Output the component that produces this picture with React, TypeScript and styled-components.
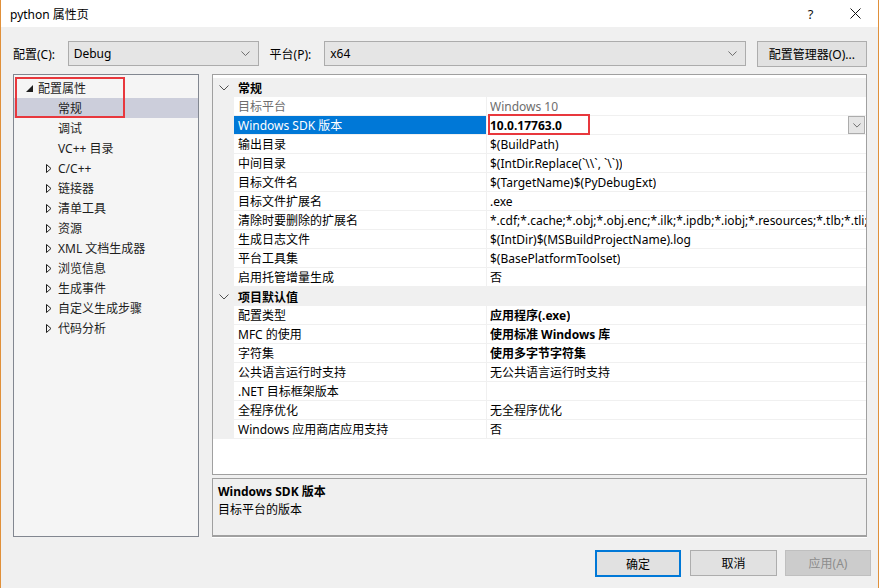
import styled, { createGlobalStyle } from "styled-components";

const GlobalStyle = createGlobalStyle`
  html, body {
    margin: 0;
    padding: 0;
    background: #f0f0f0;
  }
  * {
    box-sizing: border-box;
  }
`;

const FONT = `"Segoe UI", "Noto Sans", "Noto Sans CJK SC", sans-serif`;

interface TreeItem {
  label: string;
  kind: "root" | "leaf" | "branch";
  selected?: boolean;
}

const treeItems: TreeItem[] = [
  { label: "配置属性", kind: "root" },
  { label: "常规", kind: "leaf", selected: true },
  { label: "调试", kind: "leaf" },
  { label: "VC++ 目录", kind: "leaf" },
  { label: "C/C++", kind: "branch" },
  { label: "链接器", kind: "branch" },
  { label: "清单工具", kind: "branch" },
  { label: "资源", kind: "branch" },
  { label: "XML 文档生成器", kind: "branch" },
  { label: "浏览信息", kind: "branch" },
  { label: "生成事件", kind: "branch" },
  { label: "自定义生成步骤", kind: "branch" },
  { label: "代码分析", kind: "branch" },
];

interface GridRow {
  name: string;
  value?: string;
  header?: boolean;
  bold?: boolean;
  muted?: boolean;
  selected?: boolean;
}

const gridRows: GridRow[] = [
  { name: "常规", header: true },
  { name: "目标平台", value: "Windows 10", muted: true },
  { name: "Windows SDK 版本", value: "10.0.17763.0", bold: true, selected: true },
  { name: "输出目录", value: "$(BuildPath)" },
  { name: "中间目录", value: "$(IntDir.Replace(`\\\\`, `\\`))" },
  { name: "目标文件名", value: "$(TargetName)$(PyDebugExt)" },
  { name: "目标文件扩展名", value: ".exe" },
  {
    name: "清除时要删除的扩展名",
    value: "*.cdf;*.cache;*.obj;*.obj.enc;*.ilk;*.ipdb;*.iobj;*.resources;*.tlb;*.tli;*.tlh;*.tmp",
  },
  { name: "生成日志文件", value: "$(IntDir)$(MSBuildProjectName).log" },
  { name: "平台工具集", value: "$(BasePlatformToolset)" },
  { name: "启用托管增量生成", value: "否" },
  { name: "项目默认值", header: true },
  { name: "配置类型", value: "应用程序(.exe)", bold: true },
  { name: "MFC 的使用", value: "使用标准 Windows 库", bold: true },
  { name: "字符集", value: "使用多字节字符集", bold: true },
  { name: "公共语言运行时支持", value: "无公共语言运行时支持" },
  { name: ".NET 目标框架版本", value: "" },
  { name: "全程序优化", value: "无全程序优化" },
  { name: "Windows 应用商店应用支持", value: "否" },
];

const Chevron = ({ size = 9, color = "#606060" }: { size?: number; color?: string }) => (
  <svg width={size} height={size / 2 + 1} viewBox="0 0 10 6">
    <polyline points="0.5,0.5 5,5 9.5,0.5" fill="none" stroke={color} strokeWidth="1" />
  </svg>
);

const ExpandArrow = () => (
  <svg width="6" height="9" viewBox="0 0 6 9">
    <polygon points="0.5,0.5 5,4.5 0.5,8.5" fill="none" stroke="#1e1e1e" strokeWidth="1" />
  </svg>
);

const ExpandedArrow = () => (
  <svg width="7" height="7" viewBox="0 0 7 7">
    <polygon points="7,0 7,7 0,7" fill="#1e1e1e" />
  </svg>
);

const App = () => {
  return (
    <>
      <GlobalStyle />
      <Window>
        <TitleBar>
          <Title>python 属性页</Title>
          <TitleButtons>
            <TitleBtn>?</TitleBtn>
            <TitleBtn>
              <svg width="11" height="11" viewBox="0 0 11 11">
                <path d="M0.5 0.5 L10.5 10.5 M10.5 0.5 L0.5 10.5" stroke="#111" strokeWidth="1" />
              </svg>
            </TitleBtn>
          </TitleButtons>
        </TitleBar>

        <Body>
          <TopRow>
            <Label>配置(C):</Label>
            <Combo $width={192}>
              <span>Debug</span>
              <Chevron />
            </Combo>
            <Label $left={11}>平台(P):</Label>
            <Combo $width={424}>
              <span>x64</span>
              <Chevron />
            </Combo>
            <Button $width={111} $left={11}>配置管理器(O)...</Button>
          </TopRow>

          <Main>
            <TreePanel>
              {treeItems.map((item) => (
                <TreeRow key={item.label} $selected={item.selected}>
                  <TreeIcon $indent={item.kind === "root" ? 12 : 32}>
                    {item.kind === "root" && <ExpandedArrow />}
                    {item.kind === "branch" && <ExpandArrow />}
                  </TreeIcon>
                  <TreeLabel>{item.label}</TreeLabel>
                  {item.kind === "root" && <Highlight />}
                </TreeRow>
              ))}
            </TreePanel>

            <RightColumn>
              <Grid>
                {gridRows.map((row) =>
                  row.header ? (
                    <HeaderRow key={row.name}>
                      <Gutter>
                        <Chevron size={10} color="#505050" />
                      </Gutter>
                      <HeaderLabel>{row.name}</HeaderLabel>
                    </HeaderRow>
                  ) : (
                    <PropRow key={row.name}>
                      <Gutter />
                      <NameCell $selected={row.selected} $muted={row.muted}>
                        {row.name}
                      </NameCell>
                      <ValueCell $bold={row.bold} $muted={row.muted}>
                        <ValueText>{row.value}</ValueText>
                        {row.selected && <RedBox />}
                        {row.selected && (
                          <DropBtn>
                            <Chevron size={8} color="#505050" />
                          </DropBtn>
                        )}
                      </ValueCell>
                    </PropRow>
                  )
                )}
              </Grid>
              <Description>
                <DescTitle>Windows SDK 版本</DescTitle>
                <DescText>目标平台的版本</DescText>
              </Description>
            </RightColumn>
          </Main>

          <Footer>
            <Button $width={86} $primary>确定</Button>
            <Button $width={87} $left={9}>取消</Button>
            <Button $width={86} $left={8} $disabled>应用(A)</Button>
          </Footer>
        </Body>
      </Window>
    </>
  );
};

export default App;

const Window = styled.div`
  width: 879px;
  height: 588px;
  display: flex;
  flex-direction: column;
  background: #f0f0f0;
  border-left: 1px solid #e0903a;
  border-right: 1px solid #e0903a;
  font-family: ${FONT};
  font-size: 12px;
  color: #000;
  overflow: hidden;
`;

const TitleBar = styled.div`
  height: 27px;
  background: #ffffff;
  display: flex;
  align-items: center;
  justify-content: space-between;
  padding-left: 9px;
`;

const Title = styled.div`
  font-size: 12px;
  color: #000;
`;

const TitleButtons = styled.div`
  display: flex;
  align-items: center;
  height: 100%;
`;

const TitleBtn = styled.div`
  width: 45px;
  height: 100%;
  display: flex;
  align-items: center;
  justify-content: center;
  font-size: 13px;
  color: #111;
`;

const Body = styled.div`
  flex: 1;
  display: flex;
  flex-direction: column;
  padding: 14px 11px 0 12px;
`;

const TopRow = styled.div`
  display: flex;
  align-items: center;
  height: 25px;
`;

const Label = styled.div<{ $left?: number }>`
  width: 55px;
  margin-left: ${(p) => p.$left ?? 0}px;
  white-space: nowrap;
`;

const Combo = styled.div<{ $width: number }>`
  width: ${(p) => p.$width}px;
  height: 25px;
  display: flex;
  align-items: center;
  justify-content: space-between;
  padding: 0 8px 0 5px;
  background: #e5e5e5;
  border: 1px solid #acacac;
  font-size: 12px;
`;

const Button = styled.div<{
  $width: number;
  $left?: number;
  $primary?: boolean;
  $disabled?: boolean;
}>`
  width: ${(p) => p.$width}px;
  height: ${(p) => (p.$primary ? 27 : 26)}px;
  margin-left: ${(p) => p.$left ?? 0}px;
  display: flex;
  align-items: center;
  justify-content: center;
  background: ${(p) => (p.$disabled ? "#cccccc" : "#e1e1e1")};
  border: ${(p) =>
    p.$primary ? "2px solid #0078d7" : p.$disabled ? "1px solid #bfbfbf" : "1px solid #adadad"};
  color: ${(p) => (p.$disabled ? "#8c8c8c" : "#000")};
  font-size: 12px;
  white-space: nowrap;
`;

const Main = styled.div`
  display: flex;
  margin-top: 8px;
  height: 463px;
`;

const TreePanel = styled.div`
  width: 187px;
  height: 463px;
  background: #f5f5f5;
  border: 1px solid #828790;
  padding-top: 3px;
  display: flex;
  flex-direction: column;
`;

const TreeRow = styled.div<{ $selected?: boolean }>`
  position: relative;
  height: 20px;
  display: flex;
  align-items: center;
  background: ${(p) => (p.$selected ? "#cccedb" : "transparent")};
`;

const TreeIcon = styled.div<{ $indent: number }>`
  width: ${(p) => p.$indent + 12}px;
  padding-left: ${(p) => p.$indent}px;
  display: flex;
  align-items: center;
`;

const TreeLabel = styled.div`
  white-space: nowrap;
  color: #1e1e1e;
`;

const Highlight = styled.div`
  position: absolute;
  z-index: 2;
  left: 1px;
  top: -1px;
  width: 110px;
  height: 41px;
  border: 2px solid #e8383d;
  pointer-events: none;
`;

const RightColumn = styled.div`
  margin-left: 13px;
  width: 655px;
  display: flex;
  flex-direction: column;
`;

const Grid = styled.div`
  height: 401px;
  background: #ffffff;
  border: 1px solid #a0a0a0;
  padding-top: 3px;
  display: flex;
  flex-direction: column;
`;

const HeaderRow = styled.div`
  height: 19px;
  display: flex;
  align-items: center;
  background: #f0f0f0;
`;

const Gutter = styled.div`
  width: 21px;
  height: 100%;
  flex-shrink: 0;
  background: #f0f0f0;
  display: flex;
  align-items: center;
  justify-content: center;
`;

const HeaderLabel = styled.div`
  padding-left: 4px;
  font-weight: bold;
`;

const PropRow = styled.div`
  height: 19px;
  display: flex;
`;

const NameCell = styled.div<{ $selected?: boolean; $muted?: boolean }>`
  width: 253px;
  flex-shrink: 0;
  padding-left: 4px;
  display: flex;
  align-items: center;
  white-space: nowrap;
  background: ${(p) => (p.$selected ? "#0078d7" : "#ffffff")};
  color: ${(p) => (p.$selected ? "#ffffff" : p.$muted ? "#6d6d6d" : "#000")};
  border-bottom: 1px solid #f0f0f0;
  border-right: 1px solid #f0f0f0;
`;

const ValueCell = styled.div<{ $bold?: boolean; $muted?: boolean }>`
  position: relative;
  flex: 1;
  min-width: 0;
  padding-left: 3px;
  display: flex;
  align-items: center;
  font-weight: ${(p) => (p.$bold ? "bold" : "normal")};
  color: ${(p) => (p.$muted ? "#6d6d6d" : "#000")};
  border-bottom: 1px solid #f0f0f0;
`;

const ValueText = styled.div`
  white-space: nowrap;
  overflow: hidden;
`;

const RedBox = styled.div`
  position: absolute;
  left: 1px;
  top: -2px;
  width: 102px;
  height: 21px;
  border: 2px solid #e8383d;
`;

const DropBtn = styled.div`
  position: absolute;
  right: 1px;
  top: 0;
  width: 17px;
  height: 18px;
  display: flex;
  align-items: center;
  justify-content: center;
  background: #e5e5e5;
  border: 1px solid #acacac;
`;

const Description = styled.div`
  margin-top: 3px;
  height: 59px;
  border: 1px solid #a0a0a0;
  border-bottom: 2px solid #a0a0a0;
  box-shadow: 0 1px 0 #ffffff;
  padding: 4px 5px;
  background: #f0f0f0;
`;

const DescTitle = styled.div`
  font-weight: bold;
  line-height: 18px;
`;

const DescText = styled.div`
  line-height: 18px;
`;

const Footer = styled.div`
  display: flex;
  justify-content: flex-end;
  margin-top: 13px;
  margin-right: -4px;
`;
